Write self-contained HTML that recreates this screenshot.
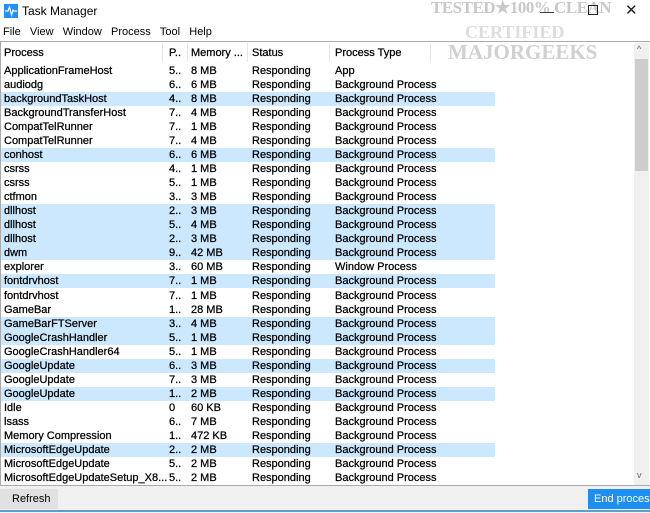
<!DOCTYPE html>
<html><head><meta charset="utf-8"><style>
*{margin:0;padding:0;box-sizing:border-box}
body{width:650px;height:513px;overflow:hidden;background:#fff;font-family:"Liberation Sans",sans-serif;font-size:11px;color:#000;position:relative}
.t{position:absolute;white-space:nowrap}
.row{position:absolute;left:1px;width:494px;height:14px}
.hl{background:#cce8ff}
.c{position:absolute;top:0;line-height:14px;white-space:nowrap;-webkit-text-stroke:0.25px #000}
</style></head><body>
<svg style="position:absolute;left:4px;top:4px" width="14" height="14"><rect width="14" height="14" fill="#1e90ff"/><path d="M1 7H4L5.5 3L7.5 11L9 6L10 7H13" stroke="#fff" stroke-width="1.2" fill="none"/></svg>
<div class="t" style="left:22px;top:4px;font-size:12px">Task Manager</div>
<div class="t" style="left:431px;top:-2px;font-family:'Liberation Serif',serif;font-weight:bold;font-size:17px;color:#c8c8c8;letter-spacing:-0.5px">TESTED★100% CLEAN</div>
<div class="t" style="left:465px;top:22px;font-family:'Liberation Serif',serif;font-weight:bold;font-size:18px;color:#ddd">CERTIFIED</div>
<div class="t" style="left:448px;top:40px;font-family:'Liberation Serif',serif;font-weight:bold;font-size:21px;color:#d0d0d0">MAJORGEEKS</div>
<div class="t" style="left:540px;top:3px;font-size:14px;color:#333">—</div>
<svg style="position:absolute;left:588px;top:5px" width="10" height="10"><rect x=".5" y=".5" width="9" height="9" fill="none" stroke="#222"/></svg>
<div class="t" style="left:625px;top:1px;font-size:15px;color:#222">✕</div>
<div class="t" style="left:3px;top:26px;word-spacing:0">File&nbsp;&nbsp;&nbsp;View&nbsp;&nbsp;&nbsp;Window&nbsp;&nbsp;&nbsp;Process&nbsp;&nbsp;&nbsp;Tool&nbsp;&nbsp;&nbsp;Help</div>
<div style="position:absolute;left:0;top:41px;width:650px;height:445px;border:1px solid #aaa;border-right:none"></div>
<div style="position:absolute;left:162px;top:43px;width:1px;height:19px;background:#e5e5e5"></div>
<div style="position:absolute;left:187px;top:43px;width:1px;height:19px;background:#e5e5e5"></div>
<div style="position:absolute;left:247px;top:43px;width:1px;height:19px;background:#e5e5e5"></div>
<div style="position:absolute;left:329px;top:43px;width:1px;height:19px;background:#e5e5e5"></div>
<div style="position:absolute;left:430px;top:43px;width:1px;height:19px;background:#e5e5e5"></div>
<div class="row" style="top:46px"><span class="c" style="left:3px">Process</span><span class="c" style="left:168px">P..</span><span class="c" style="left:190px">Memory ...</span><span class="c" style="left:251px">Status</span><span class="c" style="left:334px">Process Type</span></div>
<div style="position:absolute;left:634px;top:43px;width:15px;height:442px;background:#f0f0f0"></div>
<div style="position:absolute;left:635px;top:59px;width:13px;height:112px;background:#cdcdcd"></div>
<div class="t" style="left:637px;top:44px;font-size:9px;color:#666">^</div>
<div class="t" style="left:637px;top:470px;font-size:9px;color:#666">v</div>
<div id="rows"></div>
<div style="position:absolute;left:0;top:486px;width:650px;height:27px;background:#f0f0f0"></div>
<div style="position:absolute;left:0;top:489px;width:58px;height:20px;background:#e1e1e1"></div>
<div class="t" style="left:12px;top:493px">Refresh</div>
<div style="position:absolute;left:588px;top:489px;width:62px;height:20px;background:#1e8ff0"></div>
<div class="t" style="left:594px;top:493px;color:#fff">End process</div>
<div style="position:absolute;left:0;top:510px;width:650px;height:2px;background:#5f9ec7"></div>
<script>
var d=[["ApplicationFrameHost","5..","8 MB","App",0],["audiodg","6..","6 MB","B",0],["backgroundTaskHost","4..","8 MB","B",1],["BackgroundTransferHost","7..","4 MB","B",0],["CompatTelRunner","7..","1 MB","B",0],["CompatTelRunner","7..","4 MB","B",0],["conhost","6..","6 MB","B",1],["csrss","4..","1 MB","B",0],["csrss","5..","1 MB","B",0],["ctfmon","3..","3 MB","B",0],["dllhost","2..","3 MB","B",1],["dllhost","5..","4 MB","B",1],["dllhost","2..","3 MB","B",1],["dwm","9..","42 MB","B",1],["explorer","3..","60 MB","Window Process",0],["fontdrvhost","7..","1 MB","B",1],["fontdrvhost","7..","1 MB","B",0],["GameBar","1..","28 MB","B",0],["GameBarFTServer","3..","4 MB","B",1],["GoogleCrashHandler","5..","1 MB","B",1],["GoogleCrashHandler64","5..","1 MB","B",0],["GoogleUpdate","6..","3 MB","B",1],["GoogleUpdate","7..","3 MB","B",0],["GoogleUpdate","1..","2 MB","B",1],["Idle","0","60 KB","B",0],["lsass","6..","7 MB","B",0],["Memory Compression","1..","472 KB","B",0],["MicrosoftEdgeUpdate","2..","2 MB","B",1],["MicrosoftEdgeUpdate","5..","2 MB","B",0],["MicrosoftEdgeUpdateSetup_X8...","5..","2 MB","B",0]];
var h="";d.forEach(function(r,i){var top=(64+i*14.03).toFixed(1);h+='<div class="row'+(r[4]?' hl':'')+'" style="top:'+top+'px"><span class="c" style="left:3px">'+r[0]+'</span><span class="c" style="left:168px">'+r[1]+'</span><span class="c" style="left:190px">'+r[2]+'</span><span class="c" style="left:251px">Responding</span><span class="c" style="left:334px">'+(r[3]=="B"?"Background Process":r[3])+'</span></div>';});
document.getElementById("rows").innerHTML=h;
</script>
</body></html>
